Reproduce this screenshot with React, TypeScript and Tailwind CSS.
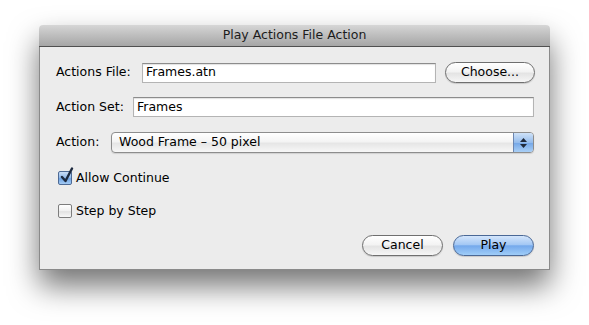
import React from "react";

const font = { fontFamily: '"Lucida Grande", "DejaVu Sans", "Liberation Sans", sans-serif' };

function TextField({ value, className }: { value: string; className: string }) {
  return (
    <div
      className={`h-[20px] bg-white border border-[#b4b4b4] border-t-[#8c8c8c] shadow-[inset_0_1px_1px_rgba(0,0,0,0.12)] flex items-center pl-[3px] text-[12.5px] text-black ${className}`}
    >
      {value}
    </div>
  );
}

function PillButton({ label, primary, className }: { label: string; primary?: boolean; className: string }) {
  return (
    <div
      className={`h-[21px] rounded-full flex items-center justify-center text-[12.5px] text-black ${
        primary
          ? "border border-[#4a6896] bg-[linear-gradient(to_bottom,#d3e5fb_0%,#a4c8f4_45%,#75a9ec_52%,#9fcdf8_100%)]"
          : "border border-[#6f6f6f] bg-[linear-gradient(to_bottom,#ffffff_0%,#f3f3f3_45%,#e4e4e4_55%,#f6f6f6_100%)]"
      } shadow-[0_1px_1px_rgba(0,0,0,0.15)] ${className}`}
    >
      {label}
    </div>
  );
}

function Checkbox({ checked, label }: { checked?: boolean; label: string }) {
  return (
    <div className="flex items-center h-[14px] ml-[18px]">
      <div
        className={`relative w-[14px] h-[14px] rounded-[2px] border ${
          checked
            ? "border-[#4d6a95] bg-[linear-gradient(to_bottom,#c9ddf6_0%,#8fb8ea_50%,#6ea3e4_55%,#a4cbf4_100%)]"
            : "border-[#7d7d7d] bg-[linear-gradient(to_bottom,#ffffff_0%,#f0f0f0_50%,#e2e2e2_55%,#f8f8f8_100%)]"
        }`}
      >
        {checked && (
          <svg className="absolute left-[1px] -top-[5px]" width="14" height="17" viewBox="0 0 14 17">
            <path d="M2 10 L5.5 14 L12 1.5" fill="none" stroke="#1d2a3f" strokeWidth="2.4" strokeLinecap="round" strokeLinejoin="round" />
          </svg>
        )}
      </div>
      <span className="ml-[4px] text-[12.5px] text-black">{label}</span>
    </div>
  );
}

export default function App() {
  return (
    <div className="w-[589px] h-[325px] bg-white overflow-hidden" style={font}>
      <div className="ml-[39px] mt-[25px] w-[511px] h-[245px] flex flex-col rounded-t-[4px] shadow-[0_16px_30px_rgba(0,0,0,0.55)]">
        {/* Title bar */}
        <div className="h-[22px] rounded-t-[4px] bg-[linear-gradient(to_bottom,#d6d6d6_0%,#c2c2c2_40%,#a6a6a6_100%)] border-b border-[#505050] flex items-center justify-center text-[12.5px] text-[#1c1c1c]">
          Play Actions File Action
        </div>

        {/* Body */}
        <div className="flex-1 flex flex-col bg-[#ececec] border-x border-b border-[#8a8a8a] pt-[15px]">
          <div className="flex items-center h-[21px]">
            <span className="ml-[16px] w-[86px] text-[12.5px] text-black">Actions File:</span>
            <TextField value="Frames.atn" className="w-[294px]" />
            <PillButton label="Choose..." className="ml-[9px] w-[90px]" />
          </div>

          <div className="flex items-center h-[20px] mt-[14px]">
            <span className="ml-[16px] w-[77px] text-[12.5px] text-black">Action Set:</span>
            <TextField value="Frames" className="w-[401px]" />
          </div>

          <div className="flex items-center h-[21px] mt-[15px]">
            <span className="ml-[16px] w-[55px] text-[12.5px] text-black">Action:</span>
            <div className="w-[423px] h-[21px] rounded-[4px] border border-[#8d8d8d] bg-[linear-gradient(to_bottom,#ffffff_0%,#f4f4f4_45%,#e6e6e6_55%,#f7f7f7_100%)] flex items-center overflow-hidden shadow-[0_1px_1px_rgba(0,0,0,0.12)]">
              <span className="flex-1 pl-[7px] text-[12.5px] text-black">Wood Frame – 50 pixel</span>
              <div className="w-[20px] h-full border-l border-[#6c86b0] bg-[linear-gradient(to_bottom,#cfe2f8_0%,#95bcec_50%,#77a9e8_55%,#a9cff6_100%)] flex flex-col items-center justify-center gap-[2px]">
                <svg width="7" height="4" viewBox="0 0 7 4">
                  <path d="M3.5 0 L7 4 L0 4 Z" fill="#1f2a3c" />
                </svg>
                <svg width="7" height="4" viewBox="0 0 7 4">
                  <path d="M0 0 L7 0 L3.5 4 Z" fill="#1f2a3c" />
                </svg>
              </div>
            </div>
          </div>

          <div className="mt-[18px]">
            <Checkbox checked label="Allow Continue" />
          </div>
          <div className="mt-[19px]">
            <Checkbox label="Step by Step" />
          </div>

          <div className="flex justify-end h-[21px] mt-[17px] pr-[15px]">
            <PillButton label="Cancel" className="w-[81px]" />
            <PillButton label="Play" primary className="ml-[10px] w-[81px]" />
          </div>
        </div>
      </div>
    </div>
  );
}
